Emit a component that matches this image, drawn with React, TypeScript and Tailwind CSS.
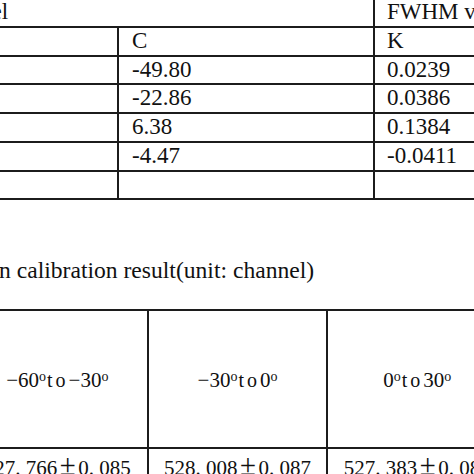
import React from 'react';

const topRows: [string, string][] = [
    ['C', 'K'],
    ['-49.80', '0.0239'],
    ['-22.86', '0.0386'],
    ['6.38', '0.1384'],
    ['-4.47', '-0.0411'],
    ['', ''],
];

const Deg: React.FC = () => (
    <span className="relative -top-[6px] text-[14px] leading-none">o</span>
);

const Range: React.FC<{ from: string; to: string }> = ({ from, to }) => (
    <span className="whitespace-nowrap text-[21px]">
        <span>{from}</span>
        <Deg />
        <span className="ml-[1px] tracking-[3px] text-[20px]">to</span>
        <span>{to}</span>
        <Deg />
    </span>
);

// song-style numbers: the dot takes a half-width cell, the ± a full one
const Val: React.FC<{ v: string }> = ({ v }) => (
    <span className="whitespace-nowrap text-[21px]">
        {v.split('').map((ch, i) => {
            if (ch === '.') return <span key={i} className="inline-block w-[10.5px] text-left">.</span>;
            if (ch === '±') return <span key={i} className="inline-block w-[21px] text-center text-[29px] leading-none">±</span>;
            return <span key={i}>{ch}</span>;
        })}
    </span>
);

export default function App() {
    return (
        <div className="w-[474px] h-[474px] overflow-hidden bg-white text-[#111] font-['Liberation_Serif','Times_New_Roman',serif]">
            {/* parameter table */}
            <div className="-mt-[1px] flex flex-col text-[23px]">
                <div className="flex h-[28.77px] border-b-2 border-[#1c1c1c]">
                    <div className="w-[373px] flex items-center overflow-hidden whitespace-nowrap">
                        <span className="-ml-[52px]">Model</span>
                    </div>
                    <div className="flex-1 flex items-center pl-[12px] border-l-2 border-[#1c1c1c] overflow-hidden whitespace-nowrap">
                        FWHM vs. channel
                    </div>
                </div>
                {topRows.map(([c, k], i) => (
                    <div key={i} className="flex h-[28.77px] border-b-2 border-[#1c1c1c]">
                        <div className="w-[117px]" />
                        <div className="w-[256px] flex items-center pl-[13px] border-l-2 border-[#1c1c1c]">{c}</div>
                        <div className="flex-1 flex items-center pl-[12px] border-l-2 border-[#1c1c1c]">{k}</div>
                    </div>
                ))}
            </div>

            <div className="mt-[56.5px] -ml-[1px] text-[23.6px] leading-[27px] whitespace-nowrap">
                n calibration result(unit: channel)
            </div>

            {/* calibration table */}
            <div className="mt-[25px] -ml-[32px] w-[540px] border-t-2 border-[#1c1c1c]">
                <div className="flex h-[138px] border-b-2 border-[#1c1c1c]">
                    <div className="w-[181px] flex items-center justify-center pt-[4px] border-r-2 border-[#1c1c1c]">
                        <Range from="−60" to="−30" />
                    </div>
                    <div className="w-[180px] flex items-center justify-center pt-[4px] border-r-2 border-[#1c1c1c]">
                        <Range from="−30" to="0" />
                    </div>
                    <div className="w-[180px] flex items-center justify-center pt-[4px] border-r-2 border-[#1c1c1c]">
                        <Range from="0" to="30" />
                    </div>
                </div>
                <div className="flex h-[40px] leading-[26px]">
                    <div className="w-[181px] flex justify-center pt-[2px] border-r-2 border-[#1c1c1c]">
                        <Val v="527.766±0.085" />
                    </div>
                    <div className="w-[180px] flex justify-center pt-[2px] border-r-2 border-[#1c1c1c]">
                        <Val v="528.008±0.087" />
                    </div>
                    <div className="w-[180px] flex justify-center pt-[2px] border-r-2 border-[#1c1c1c]">
                        <Val v="527.383±0.089" />
                    </div>
                </div>
            </div>
        </div>
    );
}
